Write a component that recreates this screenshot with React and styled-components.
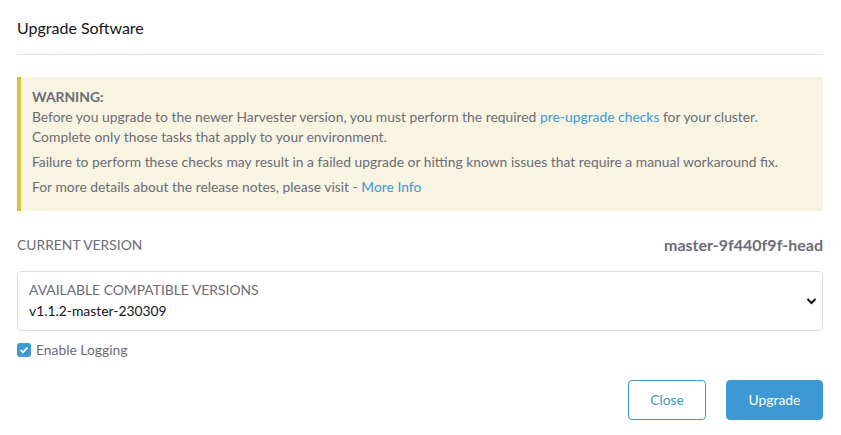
import React from "react";
import styled, { createGlobalStyle } from "styled-components";

const GlobalStyle = createGlobalStyle`
  html, body {
    margin: 0;
    padding: 0;
    background: #ffffff;
    font-family: "Lato", "Liberation Sans", sans-serif;
  }
`;

const App = () => {
  return (
    <>
      <GlobalStyle />
      <Dialog>
        <Title>Upgrade Software</Title>
        <Divider />
        <Banner>
          <BannerHead>WARNING:</BannerHead>
          <BannerText>
            Before you upgrade to the newer Harvester version, you must perform
            the required <Link>pre-upgrade checks</Link> for your cluster.
            <br />
            Complete only those tasks that apply to your environment.
          </BannerText>
          <BannerText>
            Failure to perform these checks may result in a failed upgrade or
            hitting known issues that require a manual workaround fix.
          </BannerText>
          <BannerText>
            For more details about the release notes, please visit -{" "}
            <Link>More Info</Link>
          </BannerText>
        </Banner>
        <VersionRow>
          <VersionLabel>CURRENT VERSION</VersionLabel>
          <VersionValue>master-9f440f9f-head</VersionValue>
        </VersionRow>
        <Select>
          <SelectBody>
            <SelectLabel>AVAILABLE COMPATIBLE VERSIONS</SelectLabel>
            <SelectValue>v1.1.2-master-230309</SelectValue>
          </SelectBody>
          <svg width="11" height="8" viewBox="0 0 11 8">
            <path
              d="M1.5 2 L5.5 6 L9.5 2"
              fill="none"
              stroke="#141419"
              strokeWidth="2"
            />
          </svg>
        </Select>
        <CheckRow>
          <CheckBox>
            <svg width="10" height="8" viewBox="0 0 10 8">
              <path
                d="M1.5 4 L4 6.3 L8.5 1.5"
                fill="none"
                stroke="#ffffff"
                strokeWidth="1.8"
              />
            </svg>
          </CheckBox>
          <CheckLabel>Enable Logging</CheckLabel>
        </CheckRow>
        <Footer>
          <Button $width={78}>Close</Button>
          <Button $primary $width={97}>
            Upgrade
          </Button>
        </Footer>
      </Dialog>
    </>
  );
};

const Dialog = styled.div`
  display: flex;
  flex-direction: column;
  padding: 17px 18px 15px 17px;
  box-sizing: border-box;
  width: 841px;
  height: 435px;
`;

const Title = styled.div`
  font-size: 16px;
  line-height: 22px;
  color: #141419;
`;

const Divider = styled.div`
  margin-top: 15px;
  height: 1px;
  background: #dcdee7;
`;

const Banner = styled.div`
  margin-top: 22px;
  padding: 10px 16px 14px 11px;
  background: #f8f4e2;
  border-left: 4px solid #dac342;
  color: #6c6c76;
  font-size: 13.87px;
  line-height: 20px;
`;

const BannerHead = styled.div`
  font-weight: 700;
`;

const BannerText = styled.p`
  margin: 0 0 5px 0;
  &:last-child {
    margin-bottom: 0;
  }
`;

const Link = styled.span`
  color: #3d98d3;
`;

const VersionRow = styled.div`
  display: flex;
  justify-content: space-between;
  align-items: center;
  margin-top: 23px;
  height: 22px;
`;

const VersionLabel = styled.div`
  font-size: 13.87px;
  line-height: 20px;
  color: #6c6c76;
`;

const VersionValue = styled.div`
  font-size: 16px;
  line-height: 20px;
  font-weight: 700;
  color: #6c6c76;
`;

const Select = styled.div`
  display: flex;
  align-items: center;
  justify-content: space-between;
  margin-top: 15px;
  height: 60px;
  box-sizing: border-box;
  border: 1px solid #dcdee7;
  border-radius: 4px;
  padding: 0 5px 0 11px;
`;

const SelectBody = styled.div`
  display: flex;
  flex-direction: column;
  align-self: flex-start;
  padding-top: 8px;
`;

const SelectLabel = styled.div`
  font-size: 13.87px;
  line-height: 20px;
  color: #6c6c76;
`;

const SelectValue = styled.div`
  font-size: 13.87px;
  line-height: 21px;
  color: #141419;
`;

const CheckRow = styled.div`
  display: flex;
  align-items: center;
  gap: 5px;
  margin-top: 10px;
`;

const CheckBox = styled.div`
  display: flex;
  align-items: center;
  justify-content: center;
  width: 14px;
  height: 14px;
  border-radius: 3px;
  background: #3d98d3;
`;

const CheckLabel = styled.div`
  font-size: 13.87px;
  line-height: 18px;
  color: #6c6c76;
`;

const Footer = styled.div`
  display: flex;
  justify-content: flex-end;
  gap: 20px;
  margin-top: auto;
`;

const Button = styled.button`
  width: ${(p) => p.$width}px;
  height: 40px;
  padding: 0 0 1px 0;
  border-radius: 4px;
  font-family: "Lato", "Liberation Sans", sans-serif;
  font-size: 13.87px;
  border: 1px solid #3d98d3;
  background: ${(p) => (p.$primary ? "#3d98d3" : "#ffffff")};
  color: ${(p) => (p.$primary ? "#ffffff" : "#3d98d3")};
  cursor: pointer;
`;

export default App;
